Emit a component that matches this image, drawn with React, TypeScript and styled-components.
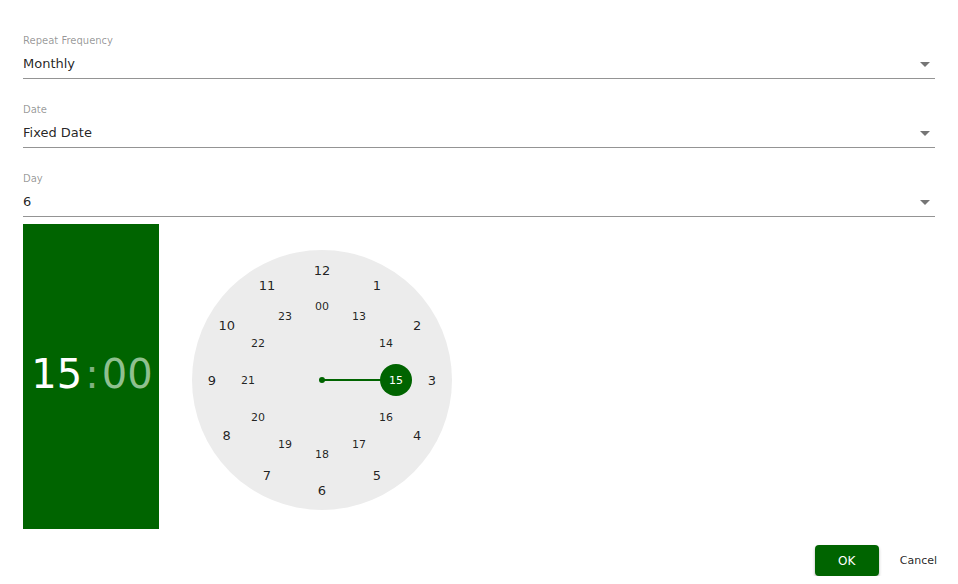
import React from "react";
import styled, { createGlobalStyle } from "styled-components";

const GlobalStyle = createGlobalStyle`
  body {
    margin: 0;
    background: #fff;
    font-family: "DejaVu Sans", Tahoma, sans-serif;
    color: rgba(0, 0, 0, 0.87);
  }
`;

const GREEN = "#006400";

interface SelectFieldProps {
  label: string;
  value: string;
}

const SelectField = ({ label, value }: SelectFieldProps) => (
  <Field>
    <FieldLabel>{label}</FieldLabel>
    <FieldInput>
      <FieldValue>{value}</FieldValue>
      <Arrow viewBox="0 0 10 5">
        <path d="M0 0 L10 0 L5 5 Z" fill="rgba(0,0,0,0.54)" />
      </Arrow>
    </FieldInput>
  </Field>
);

const SIZE = 260;
const CENTER = SIZE / 2;
const OUTER = 110;
const INNER = 74;

const position = (index: number, radius: number) => {
  const angle = (index / 12) * Math.PI * 2;
  return {
    left: CENTER + Math.sin(angle) * radius,
    top: CENTER - Math.cos(angle) * radius,
  };
};

const outerHours = ["12", "1", "2", "3", "4", "5", "6", "7", "8", "9", "10", "11"];
const innerHours = ["00", "13", "14", "15", "16", "17", "18", "19", "20", "21", "22", "23"];
const selected = "15";

const Clock = () => {
  const sel = position(innerHours.indexOf(selected), INNER);
  return (
    <ClockFace>
      <Hand width={SIZE} height={SIZE}>
        <line x1={CENTER} y1={CENTER} x2={sel.left} y2={sel.top} stroke={GREEN} strokeWidth={2} />
        <circle cx={CENTER} cy={CENTER} r={3} fill={GREEN} />
        <circle cx={sel.left} cy={sel.top} r={16} fill={GREEN} />
      </Hand>
      {outerHours.map((h, i) => (
        <Hour key={h} $size={13} style={position(i, OUTER)}>
          {h}
        </Hour>
      ))}
      {innerHours.map((h, i) => (
        <Hour key={h} $size={11} $active={h === selected} style={position(i, INNER)}>
          {h}
        </Hour>
      ))}
    </ClockFace>
  );
};

const App = () => (
  <>
    <GlobalStyle />
    <Page>
      <SelectField label="Repeat Frequency" value="Monthly" />
      <SelectField label="Date" value="Fixed Date" />
      <SelectField label="Day" value="6" />
      <TimeRow>
        <TimePanel>
          <TimeText>
            <Hours>15</Hours>
            <Colon>:</Colon>
            <Minutes>00</Minutes>
          </TimeText>
        </TimePanel>
        <Clock />
      </TimeRow>
      <Footer>
        <OkButton>OK</OkButton>
        <CancelButton>Cancel</CancelButton>
      </Footer>
    </Page>
  </>
);

export default App;

const Page = styled.div`
  padding: 34px 23px 0 23px;
  display: flex;
  flex-direction: column;
`;

const Field = styled.div`
  display: flex;
  flex-direction: column;
  margin-bottom: 24px;
  &:nth-of-type(3) {
    margin-bottom: 7px;
  }
`;

const FieldLabel = styled.label`
  font-size: 10px;
  line-height: 14px;
  color: rgba(0, 0, 0, 0.42);
`;

const FieldInput = styled.div`
  display: flex;
  align-items: center;
  margin-top: 6px;
  padding-bottom: 4px;
  border-bottom: 1px solid rgba(0, 0, 0, 0.42);
`;

const FieldValue = styled.span`
  flex: 1;
  font-size: 13px;
  line-height: 20px;
`;

const Arrow = styled.svg`
  width: 10px;
  height: 5px;
  margin-right: 5px;
`;

const TimeRow = styled.div`
  display: flex;
  align-items: flex-start;
`;

const TimePanel = styled.div`
  width: 136px;
  height: 305px;
  background: ${GREEN};
  display: flex;
  align-items: center;
  justify-content: center;
`;

const TimeText = styled.div`
  font-size: 40px;
  line-height: 1;
  margin-top: -6px;
  margin-left: 2px;
  white-space: nowrap;
`;

const Hours = styled.span`
  color: #fff;
`;

const Colon = styled.span`
  color: rgba(255, 255, 255, 0.5);
  margin: 0 3px;
`;

const Minutes = styled.span`
  color: #8fc08f;
`;

const ClockFace = styled.div`
  position: relative;
  width: ${SIZE}px;
  height: ${SIZE}px;
  border-radius: 50%;
  background: #ececec;
  margin: 26px 0 0 33px;
`;

const Hand = styled.svg`
  position: absolute;
  inset: 0;
`;

const Hour = styled.span<{ $size: number; $active?: boolean }>`
  position: absolute;
  transform: translate(-50%, -50%);
  font-size: ${({ $size }) => $size}px;
  color: ${({ $active }) => ($active ? "#fff" : "rgba(0, 0, 0, 0.87)")};
  line-height: 1;
`;

const Footer = styled.div`
  display: flex;
  justify-content: flex-end;
  align-items: center;
  gap: 13px;
  margin-top: 16px;
  margin-right: -10px;
`;

const OkButton = styled.button`
  width: 64px;
  height: 31px;
  border: none;
  border-radius: 4px;
  background: ${GREEN};
  color: #fff;
  font-family: inherit;
  font-size: 12px;
  box-shadow: 0 2px 3px rgba(0, 0, 0, 0.3);
`;

const CancelButton = styled.button`
  border: none;
  background: none;
  padding: 0 8px;
  height: 31px;
  font-family: inherit;
  font-size: 11px;
  color: rgba(0, 0, 0, 0.87);
`;
